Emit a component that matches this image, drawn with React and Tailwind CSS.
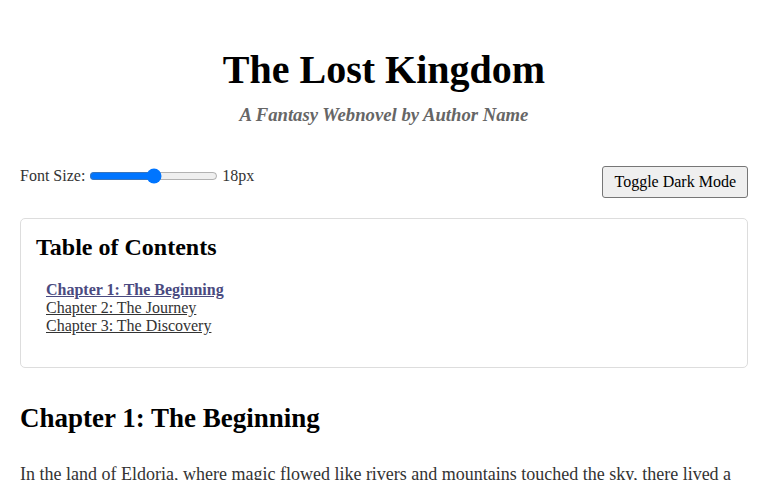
import React, { useState } from "react";

export default function App() {
  const [size, setSize] = useState(18);
  return (
    <div className="min-h-screen bg-white text-[#333] p-5" style={{ fontFamily: '"Liberation Serif", "Times New Roman", serif' }}>
      <header className="text-center">
        <h1 className="text-[40px] font-bold text-black leading-[46px] mt-[27px] mb-[11px]">The Lost Kingdom</h1>
        <p className="text-[18.7px] font-bold italic text-[#666] leading-[22px]">A Fantasy Webnovel by Author Name</p>
      </header>

      <div className="flex items-center justify-between mt-[28px] text-[16px]">
        <div className="flex items-center">
          <span>Font Size:</span>
          <input
            type="range"
            min="12"
            max="24"
            value={size}
            onChange={(e) => setSize(Number(e.target.value))}
            className="mx-1 w-[129px]"
          />
          <span>{size}px</span>
        </div>
        <button className="mt-[12px] px-[11px] py-[6px] leading-[18px] bg-[#efefef] border border-[#767676] rounded-[3px] text-black text-[16px]">
          Toggle Dark Mode
        </button>
      </div>

      <nav className="mt-5 border border-[#ddd] rounded-[5px] px-[15px] pt-[14px] pb-[32px]">
        <h2 className="text-[24px] font-bold text-black leading-[28px]">Table of Contents</h2>
        <ul className="mt-[20px] pl-[10px] text-[16px] leading-[18px]">
          <li><a href="#ch1" className="underline font-bold text-[#4a4a80]">Chapter 1: The Beginning</a></li>
          <li><a href="#ch2" className="underline text-[#333]">Chapter 2: The Journey</a></li>
          <li><a href="#ch3" className="underline text-[#333]">Chapter 3: The Discovery</a></li>
        </ul>
      </nav>

      <article id="ch1" style={{ fontSize: size }}>
        <h2 className="text-[27px] font-bold text-black mt-[35px] leading-[31px]">Chapter 1: The Beginning</h2>
        <p className="mt-[26px] leading-[1.6] text-[#333]">
          In the land of Eldoria, where magic flowed like rivers and mountains touched the sky, there lived a young girl named Lyra who dreamed of adventure beyond the walls of her village.
        </p>
      </article>
    </div>
  );
}
